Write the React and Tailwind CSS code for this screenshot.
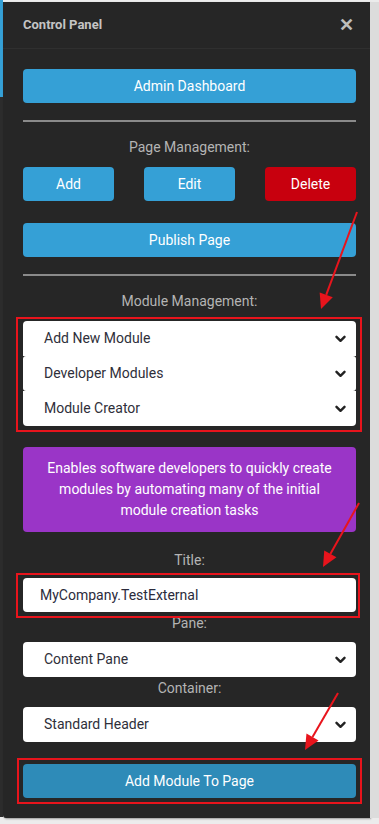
import React from 'react';

const labelCls = "text-center text-[14px] leading-[20px] text-[#b4b4b4]";
const btnCls = "h-[34px] rounded-[4px] text-white text-[14px] flex items-center justify-center";

const Chevron = () => (
  <svg width="11" height="8" viewBox="0 0 11 8" className="shrink-0">
    <path d="M1.5 1.8 L5.5 5.8 L9.5 1.8" fill="none" stroke="#222" strokeWidth="2.4" strokeLinecap="round" strokeLinejoin="round" />
  </svg>
);

const Select = ({ text, className = "" }) => (
  <div className={"h-[35px] bg-white flex items-center justify-between pl-[21px] pr-[10px] " + className}>
    <span className="text-[14px] text-[#2f2f3a]">{text}</span>
    <Chevron />
  </div>
);

// annotation arrow: line + head at tip
const Arrow = ({ x1, y1, x2, y2 }) => {
  const dx = x2 - x1, dy = y2 - y1;
  const len = Math.hypot(dx, dy);
  const ux = dx / len, uy = dy / len;
  const hl = 15, hw = 7;
  const bx = x2 - ux * hl, by = y2 - uy * hl;
  const p1 = `${bx - uy * hw},${by + ux * hw}`;
  const p2 = `${bx + uy * hw},${by - ux * hw}`;
  return (
    <g>
      <line x1={x1} y1={y1} x2={bx} y2={by} stroke="#e8141c" strokeWidth="2" />
      <polygon points={`${x2},${y2} ${p1} ${p2}`} fill="#e8141c" />
    </g>
  );
};

export default function App() {
  return (
    <div className="relative w-[379px] h-[824px] bg-[#ececec] overflow-hidden" style={{ fontFamily: 'Roboto, "Liberation Sans", sans-serif' }}>
      <div className="flex pt-[2px]">
        <div className="w-[3px] flex flex-col -mt-[2px]">
          <div className="h-[97px] bg-[#35a0d6]" />
          <div className="h-[720px] bg-[#2c2c2c]" />
        </div>
        <div className="w-[367px] h-[816px] bg-[#262626] rounded-bl-[3px] shadow-[1px_1px_2px_rgba(0,0,0,0.35)]">
          <div className="h-[47px] border-b border-[#2f2f2f] flex items-center justify-between pl-[20px] pr-[14px]">
            <span className="text-[13px] font-bold text-[#c4c4c4]">Control Panel</span>
            <span className="text-[#bdbdbd] text-[18px] font-bold leading-none mr-[2px]">✕</span>
          </div>

          <div className="pl-[20px] pr-[14px] flex flex-col">
            <div className={btnCls + " mt-[20px] bg-[#35a0d6]"}>Admin Dashboard</div>
            <div className="mt-[17px] h-[2px] bg-[#8a8a8a]" />
            <div className={labelCls + " mt-[15px]"}>Page Management:</div>
            <div className="mt-[10px] flex justify-between">
              <div className={btnCls + " w-[91px] bg-[#35a0d6]"}>Add</div>
              <div className={btnCls + " w-[91px] bg-[#35a0d6]"}>Edit</div>
              <div className={btnCls + " w-[91px] bg-[#c8000e]"}>Delete</div>
            </div>
            <div className={btnCls + " mt-[22px] bg-[#35a0d6]"}>Publish Page</div>
            <div className="mt-[17px] h-[2px] bg-[#8a8a8a]" />
            <div className={labelCls + " mt-[15px]"}>Module Management:</div>

            <div className="relative mt-[10px] flex flex-col">
              <div className="absolute -left-[7px] -right-[6px] -top-[4px] -bottom-[6px] border-2 border-[#e8141c] pointer-events-none" />
              <Select text="Add New Module" className="rounded-t-[4px]" />
              <Select text="Developer Modules" className="rounded-[3px]" />
              <Select text="Module Creator" className="rounded-b-[4px]" />
            </div>

            <div className="mt-[21px] bg-[#9a35c7] rounded-[4px] px-[16px] py-[11px] text-center text-white text-[14px] leading-[21px]">
              Enables software developers to quickly create modules by automating many of the initial module creation tasks
            </div>

            <div className={labelCls + " mt-[18px]"}>Title:</div>
            <div className="relative mt-[8px]">
              <div className="absolute -left-[7px] -right-[4px] -top-[5px] -bottom-[6px] border-2 border-[#e8141c] pointer-events-none" />
              <div className="h-[34px] bg-white rounded-[4px] flex items-center pl-[17px] text-[14px] text-[#2b2b3c]">MyCompany.TestExternal</div>
            </div>
            <div className={labelCls + " mt-[1px]"}>Pane:</div>
            <Select text="Content Pane" className="mt-[9px] h-[34px] rounded-[4px]" />
            <div className={labelCls + " mt-[1px]"}>Container:</div>
            <Select text="Standard Header" className="mt-[9px] h-[34px] rounded-[4px]" />

            <div className="relative mt-[22px]">
              <div className="absolute -left-[6px] -right-[6px] -top-[6px] -bottom-[6px] border-2 border-[#e8141c] pointer-events-none" />
              <div className={btnCls + " bg-[#2e8bb8]"}>Add Module To Page</div>
            </div>
          </div>
        </div>
        <div className="w-[9px] h-[816px] bg-[#dcdcdc]" />
      </div>

      <svg className="absolute inset-0 pointer-events-none" width="379" height="824">
        <Arrow x1={357} y1={212} x2={321} y2={309} />
        <Arrow x1={359} y1={503} x2={323} y2={567} />
        <Arrow x1={338} y1={693} x2={305} y2={750} />
      </svg>
    </div>
  );
}
